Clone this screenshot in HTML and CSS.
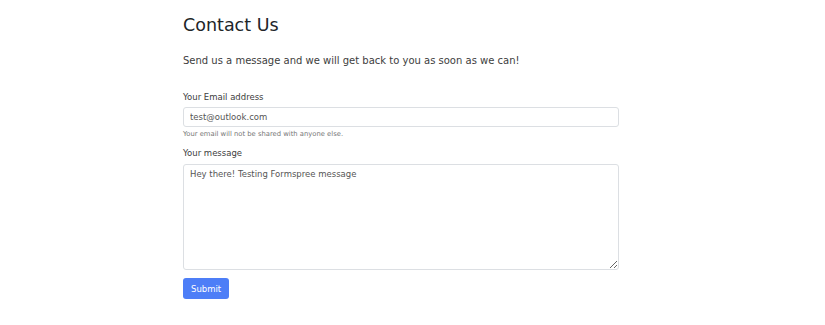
FILE: index.html
```html
<!DOCTYPE html>
<html lang="en">
<head>
  <meta charset="UTF-8" />
  <title>Contact Us</title>
  <link rel="stylesheet" href="styles.css">
</head>
<body>

  <div class="contact-box">
    <h1>Contact Us</h1>
    <p class="lead">Send us a message and we will get back to you as soon as we can!</p>

    <form id="contactForm">
      <div class="form-group">
        <label for="email">Your Email address</label>
        <input type="email" id="email" name="email" value="test@outlook.com" />
        <small class="help-text">Your email will not be shared with anyone else.</small>
      </div>

      <div class="form-group last">
        <label for="message">Your message</label>
        <textarea id="message" name="message">Hey there! Testing Formspree message</textarea>
      </div>

      <button type="submit" class="submit-btn">Submit</button>
    </form>
  </div>

</body>
</html>
```

FILE: styles.css
```css
* {
  box-sizing: border-box;
}
body {
  margin: 0;
  font-family: "DejaVu Sans", sans-serif;
  background-color: #fff;
  color: #212529;
}
.contact-box {
  width: 436px;
  margin-left: 183px;
  padding-top: 13px;
}
h1 {
  margin: 0;
  font-size: 17.5px;
  font-weight: normal;
  line-height: 24px;
  color: #212529;
}
.lead {
  margin: 18px 0 26px;
  font-size: 10px;
  color: #3d3d3d;
}
.form-group {
  margin-bottom: 10px;
}
.form-group.last {
  margin-bottom: 8px;
}
.form-group.last label {
  margin-bottom: 6px;
}
label {
  display: block;
  font-size: 8.5px;
  color: #3d3d3d;
  margin-bottom: 5px;
}
input[type="email"],
textarea {
  display: block;
  width: 100%;
  padding: 4px 6px;
  font-family: inherit;
  font-size: 8.5px;
  color: #555;
  border: 1px solid #dcdfe3;
  border-radius: 3px;
  outline: none;
}
input[type="email"] {
  height: 20px;
}
textarea {
  height: 106px;
  resize: vertical;
}
.help-text {
  display: block;
  margin-top: 3px;
  font-size: 6.8px;
  color: #777;
}
.submit-btn {
  display: block;
  padding: 0 8px;
  height: 21px;
  font-family: inherit;
  font-size: 8.5px;
  color: white;
  background-color: #4d7ef7;
  border: none;
  border-radius: 3px;
  cursor: pointer;
}
```
